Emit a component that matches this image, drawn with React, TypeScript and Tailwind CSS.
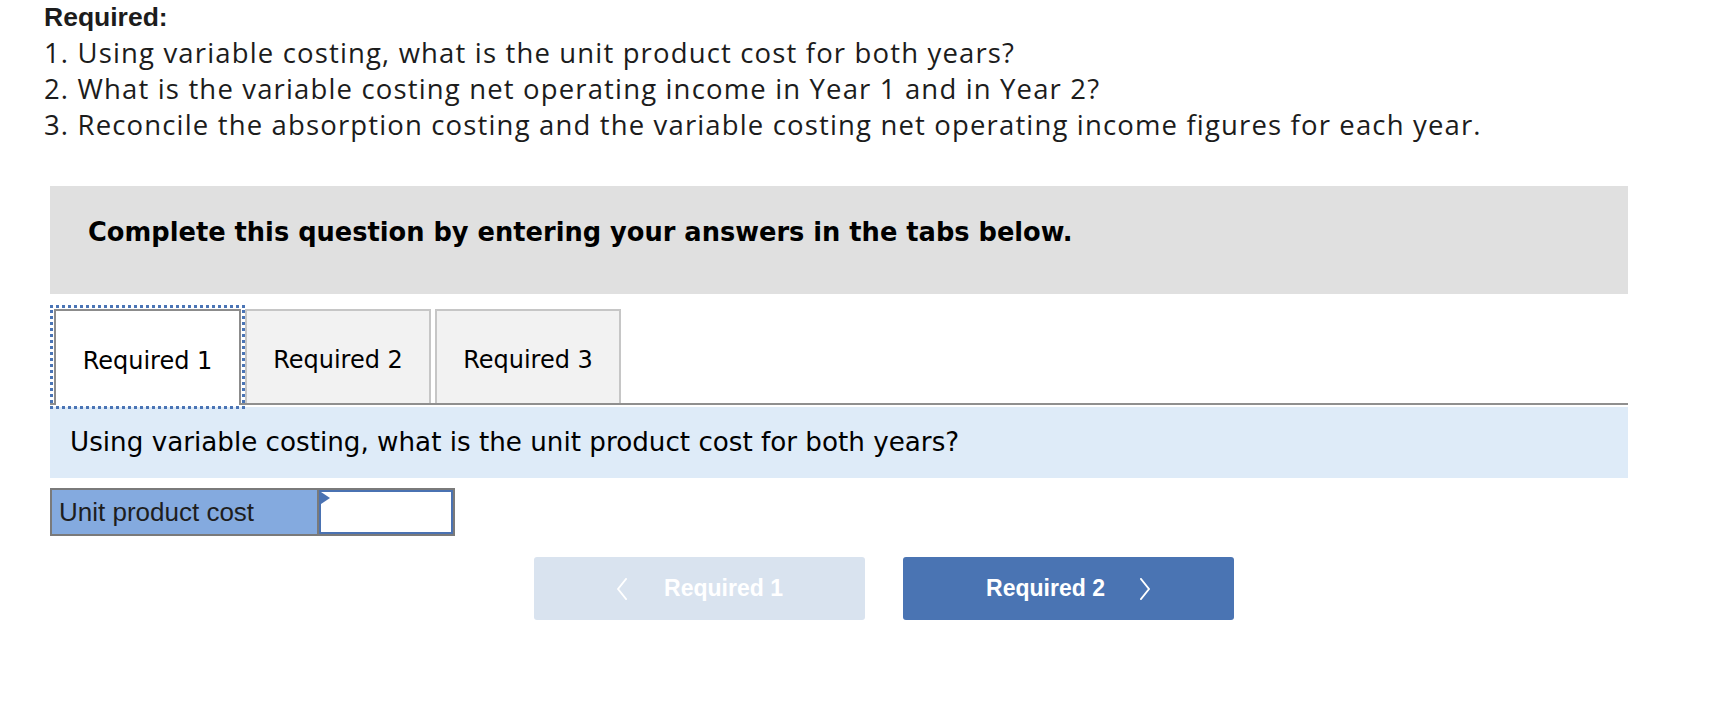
import React from "react";

const TABS = ["Required 1", "Required 2", "Required 3"];

function Chevron({ dir }: { dir: "left" | "right" }) {
  return (
    <svg width="12" height="22" viewBox="0 0 12 22" fill="none">
      <path
        d={dir === "left" ? "M10 1 L2 11 L10 21" : "M2 1 L10 11 L2 21"}
        stroke="white"
        strokeWidth="2"
        strokeLinecap="round"
        strokeLinejoin="round"
      />
    </svg>
  );
}

export default function App() {
  return (
    <div className="w-full h-[724px] bg-white text-[#1c1c1c]">
      {/* Question text */}
      <div className="pl-[44px] -mt-[1px] text-[27.5px] leading-[36px] tracking-[1.15px] font-['Open_Sans',Arial,sans-serif]">
        <div className="font-bold tracking-normal font-['Liberation_Sans',Arial,sans-serif] text-[26.5px]">Required:</div>
        <div>1. Using variable costing, what is the unit product cost for both years?</div>
        <div>2. What is the variable costing net operating income in Year 1 and in Year 2?</div>
        <div>3. Reconcile the absorption costing and the variable costing net operating income figures for each year.</div>
      </div>

      {/* Instruction panel */}
      <div className="ml-[50px] mt-[43px] w-[1578px] h-[108px] bg-[#e0e0e0] pl-[38px] pt-[31px]">
        <div className="font-['DejaVu_Sans',Verdana,sans-serif] font-bold text-[25.7px] leading-[30px] text-black">
          Complete this question by entering your answers in the tabs below.
        </div>
      </div>

      {/* Tabs */}
      <div className="ml-[50px] mt-[15px] w-[1578px] flex gap-[4px] pl-[4px] border-b-2 border-[#8f8f8f] font-['DejaVu_Sans',Verdana,sans-serif] text-[24px] text-black">
        {TABS.map((t, i) => (
          <div
            key={t}
            className={
              i === 0
                ? "w-[187px] h-[96px] -mb-[2px] flex items-center justify-center pt-[6px] bg-white border-2 border-b-0 border-[#8c8c8c] outline-[3px] outline-dotted outline-[#4a74b5] outline-offset-[1px]"
                : "w-[186px] h-[94px] flex items-center justify-center pt-[6px] bg-[#f2f2f2] border-2 border-b-0 border-[#c6c6c6]"
            }
          >
            {t}
          </div>
        ))}
      </div>

      {/* Sub-question band */}
      <div className="ml-[50px] w-[1578px] h-[71px] mt-[2px] bg-[#deebf8] pl-[20px] flex items-center font-['DejaVu_Sans',Verdana,sans-serif] text-[26.2px] text-black">
        Using variable costing, what is the unit product cost for both years?
      </div>

      {/* Answer row */}
      <div className="ml-[50px] mt-[10px] w-[405px] h-[48px] flex border-2 border-[#7a7a7a]">
        <div className="w-[267px] h-full bg-[#84aadf] border-r-2 border-[#7a7a7a] pl-[7px] flex items-center font-['Liberation_Sans',Arial,sans-serif] text-[26px] text-[#1e1e1e]">
          Unit product cost
        </div>
        <div className="relative flex-1 h-full bg-white border-2 border-[#4a72b2]">
          <div className="absolute left-0 top-0 w-0 h-0 border-t-[6px] border-b-[6px] border-l-[9px] border-t-transparent border-b-transparent border-l-[#4a72b2]" />
        </div>
      </div>

      {/* Navigation buttons */}
      <div className="mt-[21px] ml-[534px] flex gap-[38px] font-['Liberation_Sans',Arial,sans-serif] font-bold text-[23px] text-white">
        <div className="w-[331px] h-[63px] rounded-[3px] bg-[#d9e3ef] flex items-center justify-center gap-[36px]">
          <Chevron dir="left" />
          <span>Required 1</span>
        </div>
        <div className="w-[331px] h-[63px] rounded-[3px] bg-[#4a74b3] flex items-center justify-center gap-[34px]">
          <span>Required 2</span>
          <Chevron dir="right" />
        </div>
      </div>
    </div>
  );
}
